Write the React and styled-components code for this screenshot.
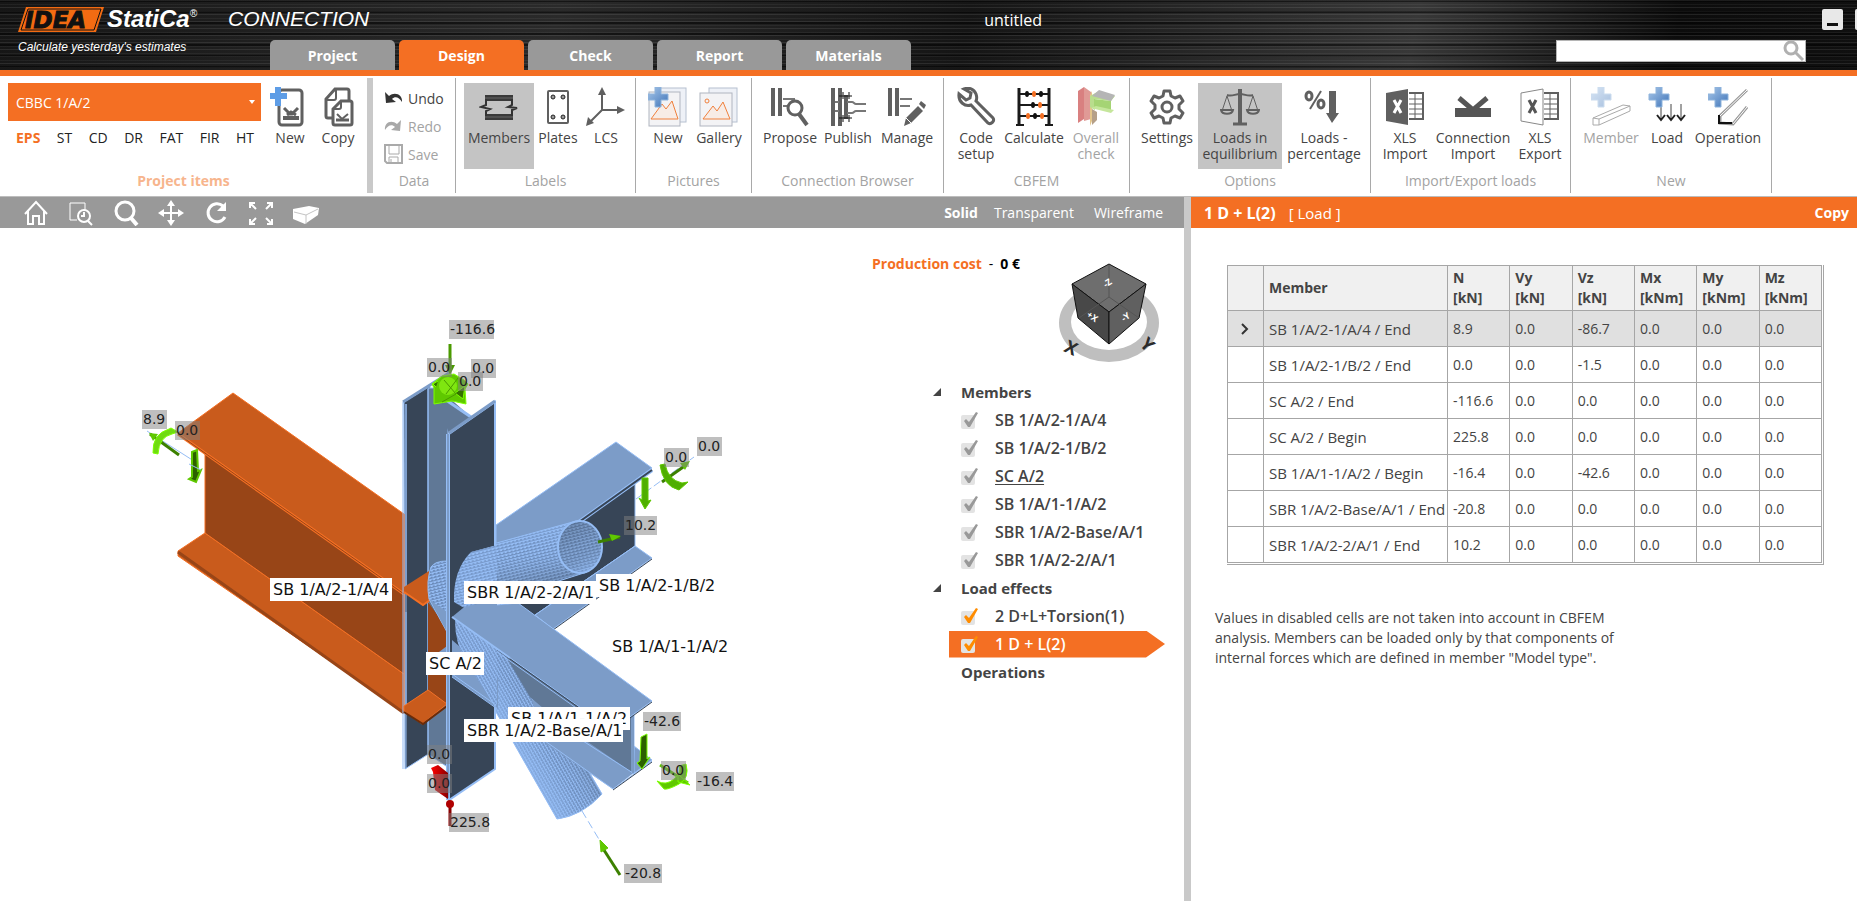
import React, { useState } from "react";
import styled, { createGlobalStyle, css } from "styled-components";

const orange = "#f46f23";
const ink = "#444444";
const muted = "#a3a3a3";

const GlobalStyle = createGlobalStyle`
  * {
    box-sizing: border-box;
  }
  body {
    margin: 0;
    background: #fff;
    color: ${ink};
    font-family: "Open Sans", "Noto Sans", sans-serif;
    font-size: 14px;
  }
  button, input, select {
    font: inherit;
    color: inherit;
    margin: 0;
  }
  button {
    background: none;
    border: 0;
    padding: 0;
    cursor: pointer;
  }
  svg {
    display: block;
    flex: none;
  }
`;

/* ---------- ribbon icons, 40 x 40 ---------- */

const Icon = ({ children, ...rest }) => (
  <svg width='40' height='40' viewBox='0 0 40 40' fill='none' {...rest}>
    {children}
  </svg>
);

const BluePlus = ({ x = 0, y = 0, opacity = 1 }) => (
  <g transform={`translate(${x} ${y})`} opacity={opacity}>
    <path
      d='M7 0h6v7h7v6h-7v7H7v-7H0V7h7z'
      fill='url(#plusFill)'
      stroke='#8fb4dc'
      strokeWidth='1'
    />
  </g>
);

const icons = {
  newItem: (
    <Icon>
      <rect x='9' y='3' width='23' height='35' rx='3' stroke='#606060' strokeWidth='3' />
      <path d='M13 31h16' stroke='#606060' strokeWidth='4' />
      <path d='M14 21l6 6h2l6-6M17 28l4-3 5 3' stroke='#606060' strokeWidth='3' />
      <path d='M5 0h6v6h6v6h-6v7H5v-7H0V6h5z' fill='#5e9de6' />
    </Icon>
  ),
  copyItem: (
    <Icon>
      <path d='M15 31H10a2 2 0 0 1-2-2V12L17 2h12a2 2 0 0 1 2 2v9' stroke='#606060' strokeWidth='3' />
      <path d='M8 13h8a2 2 0 0 0 2-2V3' stroke='#606060' strokeWidth='2' />
      <path d='M15 22l8-8h9a2 2 0 0 1 2 2v20a2 2 0 0 1-2 2H17a2 2 0 0 1-2-2z' fill='#fff' stroke='#606060' strokeWidth='3' />
      <path d='M15 22h6a2 2 0 0 0 2-2v-6' stroke='#606060' strokeWidth='2' />
      <path d='M18 33h13' stroke='#606060' strokeWidth='3' />
      <path d='M19 27l5 5 6-5' stroke='#606060' strokeWidth='2' />
    </Icon>
  ),
  members: (
    <Icon>
      <path d='M6 8h28v6H6zM6 27h28v6H6z' fill='#3a3a3a' />
      <path d='M6 11h28M6 30h28' stroke='#666' strokeWidth='1' />
      <path d='M7 12v6l-5 2 9 2-4 2v5M33 12v6l-4 2 9 1-5 2v6' stroke='#333' strokeWidth='2' />
    </Icon>
  ),
  plates: (
    <Icon>
      <rect x='10' y='4' width='20' height='32' rx='1' stroke='#606060' strokeWidth='2' />
      {[[15, 10], [25, 10], [15, 30], [25, 30]].map(([x, y]) => (
        <circle key={`${x}-${y}`} cx={x} cy={y} r='2' fill='#999' stroke='#222' strokeWidth='1' />
      ))}
    </Icon>
  ),
  lcs: (
    <Icon>
      <path d='M16 5v18h18M16 23L4 35' stroke='#606060' strokeWidth='2' />
      <path d='M16 0l4 8h-8zM39 23l-8 4v-8zM0 39l2-9 6 6z' fill='#606060' />
    </Icon>
  ),
  picture: (
    <Icon>
      <rect x='10' y='1' width='28' height='34' fill='#eef1f7' stroke='#b6c0d0' />
      <rect x='1' y='5' width='31' height='34' fill='#f3f3f5' stroke='#b0b5c0' />
      <path d='M3 32h27L24 14l-6 8-4-5z' stroke='#f0803c' strokeWidth='1' fill='#f7ece6' />
      <BluePlus />
    </Icon>
  ),
  gallery: (
    <Icon>
      <rect x='10' y='1' width='28' height='34' fill='#eef1f7' stroke='#b6c0d0' />
      <rect x='1' y='6' width='32' height='33' fill='#f3f3f5' stroke='#b0b5c0' />
      <path d='M4 32h27L24 15l-6 9-4-5z' stroke='#f0803c' strokeWidth='1' fill='#f7ece6' />
      <circle cx='8' cy='14' r='2' stroke='#f0803c' />
    </Icon>
  ),
  propose: (
    <Icon>
      <path d='M3 1v28M10 1v28' stroke='#606060' strokeWidth='4' />
      <path d='M13 12h12M13 19h6' stroke='#777' strokeWidth='2' />
      <circle cx='25' cy='21' r='7' stroke='#606060' strokeWidth='3' />
      <path d='M29 27l8 11' stroke='#606060' strokeWidth='4' />
    </Icon>
  ),
  publish: (
    <Icon>
      <path d='M5 1v38M12 1v38M18 8v24' stroke='#606060' strokeWidth='4' />
      <path d='M19 15h5c2 0 2 2 4 2h10M19 26h5c2 0 2-2 4-2h10' stroke='#777' strokeWidth='2' />
      <path d='M7 15h4M7 24h4' stroke='#777' strokeWidth='2' />
      <path d='M11 9h13M11 31h13M15 5v7M21 5v7M15 28v7M21 28v7' stroke='#111' strokeWidth='1' />
    </Icon>
  ),
  manage: (
    <Icon>
      <path d='M3 1v28M10 1v28' stroke='#606060' strokeWidth='4' />
      <path d='M13 12h12M13 19h10' stroke='#777' strokeWidth='2' />
      <path d='M17 39l2-8 12-12 5 5-12 12z' fill='#606060' />
      <path d='M32 17l2-3 5 4-2 4z' fill='#606060' />
      <path d='M19 31l5 5' stroke='#fff' />
    </Icon>
  ),
  wrench: (
    <Icon>
      <path
        d='M3 7l7 6 4-2 1-5-7-4c5-2 10 0 12 5 1 3 1 5 0 7l17 17c2 3-2 7-5 5L15 18c-6 2-13-3-12-11z'
        stroke='#606060'
        strokeWidth='3'
      />
    </Icon>
  ),
  abacus: (
    <Icon>
      <path d='M5 1v36M35 1v36' stroke='#1a1a1a' strokeWidth='3' />
      <path d='M2 38h8M31 38h8M5 7h30M5 18h30M5 29h30' stroke='#1a1a1a' strokeWidth='2' />
      <g fill='#111'>
        <ellipse cx='13' cy='7' rx='2' ry='3' />
        <ellipse cx='27' cy='7' rx='2' ry='3' />
        <ellipse cx='19' cy='18' rx='2' ry='3' />
        <ellipse cx='21' cy='29' rx='2' ry='3' />
      </g>
      <g fill={orange}>
        <ellipse cx='20' cy='7' rx='2' ry='3' />
        <ellipse cx='26' cy='18' rx='2' ry='3' />
        <ellipse cx='14' cy='29' rx='2' ry='3' />
        <ellipse cx='28' cy='29' rx='2' ry='3' />
      </g>
    </Icon>
  ),
  overall: (
    <Icon>
      <path d='M2 4l6-4v32l-6 4z' fill='#d98080' />
      <path d='M8 0l7 5v27l-7 2z' fill='#e09a96' />
      <path d='M14 8l2-4v30l-2 5z' fill='#e3c58a' />
      <path d='M16 22l5 3v8l-5 5z' fill='#b59f88' />
      <path d='M14 20V9l9-5 16 5-4 5-16-2v11z' fill='#b9dd8d' />
      <path d='M18 12l17 2v10l-17-3z' fill='#a5d474' />
      <path d='M16 9l7-6 16 5-4 6z' fill='#b5b5b5' />
      <path d='M15 21l5-2 18 4-3 3z' fill='#c5e69c' />
    </Icon>
  ),
  gear: (
    <Icon>
      <path
        d='M17 4h6l1 5 4 2 5-2 3 5-4 4v4l4 4-3 5-5-2-4 2-1 5h-6l-1-5-4-2-5 2-3-5 4-4v-4l-4-4 3-5 5 2 4-2z'
        stroke='#606060'
        strokeWidth='3'
        strokeLinejoin='round'
      />
      <circle cx='20' cy='20' r='5' stroke='#606060' strokeWidth='3' />
    </Icon>
  ),
  scales: (
    <Icon>
      <path d='M20 2v34' stroke='#606060' strokeWidth='4' />
      <path d='M13 37h14' stroke='#606060' strokeWidth='3' />
      <path d='M7 8c5 2 8-1 13-1s8 3 13 1' stroke='#606060' strokeWidth='2' />
      <path d='M7 9L2 24h10zM33 9l-5 15h10z' stroke='#606060' strokeWidth='1' />
      <path d='M1 23h12c-1 5-11 5-12 0zM27 23h12c-1 5-11 5-12 0z' fill='#c4c4c4' stroke='#606060' strokeWidth='2' />
    </Icon>
  ),
  percent: (
    <Icon>
      <ellipse cx='5' cy='9' rx='3' ry='4' stroke='#606060' strokeWidth='3' />
      <ellipse cx='17' cy='17' rx='3' ry='4' stroke='#606060' strokeWidth='3' />
      <path d='M17 4L6 22' stroke='#606060' strokeWidth='2' />
      <path d='M25 4h7v22h3l-7 10-6-10h3z' fill='#606060' />
    </Icon>
  ),
  xlsIn: (
    <Icon>
      <path d='M24 6h14v26H24' stroke='#606060' strokeWidth='2' />
      <path d='M24 12h14M24 17h14M24 22h14M24 27h14M30 6v26' stroke='#606060' strokeWidth='1' />
      <path d='M1 6l22-4v36L1 34z' fill='#606060' />
      <path d='M9 13l7 13M16 13L9 26' stroke='#fff' strokeWidth='3' />
    </Icon>
  ),
  connIn: (
    <Icon>
      <path d='M2 21h36v9H2z' fill='#555' />
      <path d='M6 11l14 12L34 11' stroke='#555' strokeWidth='5' />
    </Icon>
  ),
  xlsOut: (
    <Icon>
      <path d='M24 6h14v26H24' stroke='#606060' strokeWidth='2' />
      <path d='M24 12h14M24 17h14M24 22h14M24 27h14M30 6v26' stroke='#606060' strokeWidth='1' />
      <path d='M1 6l22-4v36L1 34z' fill='#fff' stroke='#888' strokeWidth='1' />
      <path d='M9 13l7 13M16 13L9 26' stroke='#555' strokeWidth='3' />
    </Icon>
  ),
  member: (
    <Icon>
      <BluePlus opacity='0.45' />
      <path d='M2 31l30-13 7 1v5L8 38H2zM2 31l6 1v6M8 32l31-13' stroke='#aaa' strokeWidth='1' />
    </Icon>
  ),
  load: (
    <Icon>
      <path d='M14 18v14M24 17v15M34 17v15' stroke='#444' strokeWidth='1' />
      <path d='M10 28l4 5 4-5M20 28l4 5 4-5M30 28l4 5 4-5' stroke='#222' strokeWidth='2' />
      <BluePlus x={2} />
    </Icon>
  ),
  operation: (
    <Icon>
      <path d='M39 3L12 29v7l13 1 14-17' stroke='#999' strokeWidth='3' />
      <path d='M39 3L12 29M25 37l14-17' stroke='#fff' strokeWidth='1' />
      <path d='M11 28v8h13' stroke='#111' strokeWidth='2' />
      <BluePlus />
    </Icon>
  ),
};

/* ---------- header ---------- */

const Header = styled.header`
  display: grid;
  grid-template-columns: 270px 1fr auto;
  grid-template-rows: 40px 30px;
  border-bottom: 6px solid ${orange};
  background:
    repeating-linear-gradient(180deg, rgba(255, 255, 255, 0.09) 0 1px, transparent 1px 4px, rgba(255, 255, 255, 0.05) 4px 5px, transparent 5px 7px),
    repeating-linear-gradient(180deg, rgba(0, 0, 0, 0.5) 0 2px, transparent 2px 11px),
    linear-gradient(100deg, #161616 0%, #2a2a2a 30%, #151515 52%, #383838 76%, #0c0c0c 90%, #101010 100%);
`;

const TopRow = styled.div`
  grid-column: 1 / -1;
  display: flex;
  align-items: flex-start;
  overflow: hidden;
`;

const Brand = styled.div`
  flex: 0 0 53%;
  display: flex;
  align-items: center;
  gap: 3px;
  padding: 5px 0 0 18px;
  color: #fff;
  font-family: "Liberation Sans", sans-serif;
  font-style: italic;
  line-height: 28px;
  white-space: nowrap;
`;

const BrandName = styled.span`
  font-size: 24px;
  font-weight: 700;
  sup {
    font-size: 10px;
    font-weight: 400;
    line-height: 10px;
    vertical-align: 10px;
  }
`;

const Product = styled.span`
  margin-left: 28px;
  font-size: 21px;
`;

const Title = styled.div`
  color: #fff;
  font-size: 16px;
  line-height: 40px;
`;

const WindowButtons = styled.div`
  display: flex;
  gap: 12px;
  margin: 9px -19px 0 auto;
`;

const WindowButton = styled.button`
  display: flex;
  justify-content: center;
  width: 21px;
  height: 21px;
  padding-top: 14px;
  border-radius: 2px;
  background: #e8e8e8;
  &::after {
    content: "";
    width: 11px;
    height: 3px;
    background: #111;
  }
`;

const Tagline = styled.div`
  padding-left: 18px;
  color: #fff;
  font-family: "Liberation Sans", sans-serif;
  font-size: 12px;
  font-style: italic;
  line-height: 14px;
`;

const Tabs = styled.nav`
  display: flex;
  gap: 4px;
`;

const Tab = styled.button`
  width: 125px;
  height: 30px;
  border-radius: 5px 5px 0 0;
  background: ${(p) => (p.$active ? orange : "#999")};
  color: #fff;
  font-weight: 700;
`;

const SearchBox = styled.label`
  display: flex;
  align-items: center;
  width: 250px;
  height: 22px;
  margin-right: 51px;
  border: 1px solid #b5b5b5;
  background: #fff;
  input {
    flex: 1;
    min-width: 0;
    height: 20px;
    border: 0;
    outline: none;
    background: none;
  }
`;

const Logo = () => (
  <svg width='86' height='25' viewBox='0 0 86 25' role='img' aria-label='IDEA'>
    <path d='M8 0h78l-8 25H0z' fill='#f36b12' />
    <path d='M10 2h73l-7 21H3z' fill='none' stroke='#111' strokeWidth='1' />
    <text
      x='7'
      y='21'
      fill='#111'
      stroke='#111'
      strokeWidth='1'
      fontFamily='DejaVu Sans, sans-serif'
      fontSize='23'
      fontWeight='700'
      fontStyle='italic'
    >
      IDEA
    </text>
  </svg>
);

/* ---------- ribbon ---------- */

const Ribbon = styled.div`
  display: flex;
  padding: 2px 0 3px;
  border-bottom: 1px solid #bdbdbd;
  overflow: hidden;
`;

const Group = styled.section`
  flex: none;
  display: flex;
  flex-direction: column;
  width: ${(p) => p.$width}px;
  padding-top: 5px;
  border-right: ${(p) => (p.$thick ? "6px solid #c9c9c9" : "1px solid #a9a9a9")};
`;

const GroupBody = styled.div`
  display: flex;
  min-height: 86px;
  padding-left: ${(p) => p.$pad || 0}px;
`;

const GroupTitle = styled.h2`
  margin: 0;
  color: ${(p) => (p.$accent ? "#f7b58d" : muted)};
  font-size: 14px;
  font-weight: ${(p) => (p.$accent ? 700 : 400)};
  line-height: 24px;
  text-align: center;
`;

const Tool = styled.button`
  flex: none;
  display: flex;
  flex-direction: column;
  align-items: center;
  gap: 3px;
  width: ${(p) => p.$width}px;
  padding-top: 4px;
  background: ${(p) => (p.$active ? "#c4c4c4" : "none")};
  color: ${ink};
  line-height: 16px;
  white-space: pre-line;
  ${(p) =>
    p.disabled &&
    css`
      color: ${muted};
    `}
`;

const ItemPicker = styled.div`
  width: 253px;
  margin-right: 4px;
`;

const SelectBox = styled.div`
  display: flex;
  align-items: center;
  height: 38px;
  padding-right: 6px;
  background: ${orange};
  select {
    flex: 1;
    height: 38px;
    padding: 0 8px;
    border: 0;
    outline: none;
    appearance: none;
    background: none;
    color: #fff;
  }
  option {
    color: ${ink};
  }
`;

const Caret = styled.span`
  border: 3px solid transparent;
  border-top: 4px solid #fff;
  border-bottom: 0;
`;

const CodeRow = styled.div`
  display: flex;
  justify-content: space-between;
  padding: 9px 7px 0 8px;
`;

const CodeButton = styled.button`
  color: ${(p) => (p.$active ? orange : "#222")};
  font-size: 14px;
  font-weight: ${(p) => (p.$active ? 700 : 400)};
  line-height: 16px;
`;

const DataList = styled.div`
  padding: 1px 0 0 11px;
`;

const DataButton = styled.button`
  display: flex;
  align-items: center;
  gap: 4px;
  height: 28px;
  color: ${(p) => (p.disabled ? muted : ink)};
`;

const ribbonGroups = [
  {
    title: "Labels",
    width: 180,
    pad: 8,
    tools: [
      { label: "Members", icon: "members", width: 70, active: true },
      { label: "Plates", icon: "plates", width: 48 },
      { label: "LCS", icon: "lcs", width: 48 },
    ],
  },
  {
    title: "Pictures",
    width: 116,
    pad: 7,
    tools: [
      { label: "New", icon: "picture", width: 50 },
      { label: "Gallery", icon: "gallery", width: 52 },
    ],
  },
  {
    title: "Connection Browser",
    width: 192,
    pad: 8,
    tools: [
      { label: "Propose", icon: "propose", width: 60 },
      { label: "Publish", icon: "publish", width: 56 },
      { label: "Manage", icon: "manage", width: 62 },
    ],
  },
  {
    title: "CBFEM",
    width: 186,
    pad: 6,
    tools: [
      { label: "Code\nsetup", icon: "wrench", width: 52 },
      { label: "Calculate", icon: "abacus", width: 64 },
      { label: "Overall\ncheck", icon: "overall", width: 60, disabled: true },
    ],
  },
  {
    title: "Options",
    width: 241,
    pad: 6,
    tools: [
      { label: "Settings", icon: "gear", width: 62 },
      { label: "Loads in\nequilibrium", icon: "scales", width: 84, active: true },
      { label: "Loads -\npercentage", icon: "percent", width: 84 },
    ],
  },
  {
    title: "Import/Export loads",
    width: 200,
    pad: 4,
    tools: [
      { label: "XLS\nImport", icon: "xlsIn", width: 60 },
      { label: "Connection\nImport", icon: "connIn", width: 76 },
      { label: "XLS\nExport", icon: "xlsOut", width: 58 },
    ],
  },
  {
    title: "New",
    width: 201,
    pad: 8,
    tools: [
      { label: "Member", icon: "member", width: 64, disabled: true },
      { label: "Load", icon: "load", width: 48 },
      { label: "Operation", icon: "operation", width: 74 },
    ],
  },
];

const codes = ["EPS", "ST", "CD", "DR", "FAT", "FIR", "HT"];

const RibbonBar = () => (
  <Ribbon>
    <Group $width={373} $thick>
      <GroupBody $pad={8}>
        <ItemPicker>
          <SelectBox>
            <select aria-label='Project item'>
              <option>CBBC 1/A/2</option>
            </select>
            <Caret />
          </SelectBox>
          <CodeRow>
            {codes.map((code, i) => (
              <CodeButton key={code} $active={i === 0}>
                {code}
              </CodeButton>
            ))}
          </CodeRow>
        </ItemPicker>
        <Tool $width={50}>
          {icons.newItem}
          New
        </Tool>
        <Tool $width={46}>
          {icons.copyItem}
          Copy
        </Tool>
      </GroupBody>
      <GroupTitle $accent>Project items</GroupTitle>
    </Group>
    <Group $width={83}>
      <GroupBody>
        <DataList>
          <DataButton>
            <svg width='20' height='20' viewBox='0 0 20 20'>
              <path d='M1 4l1 11 10-1-4-3c3-3 7-2 10 3 1-7-7-11-13-6z' fill='#333' />
            </svg>
            Undo
          </DataButton>
          <DataButton disabled>
            <svg width='20' height='20' viewBox='0 0 20 20'>
              <path d='M17 4l-1 11-9-1 4-3c-3-3-7-2-10 3-1-7 6-11 12-6z' fill='#a8a8a8' />
            </svg>
            Redo
          </DataButton>
          <DataButton disabled>
            <svg width='20' height='20' viewBox='0 0 20 20' fill='none' stroke='#aaa'>
              <path d='M1 1h17v18H3l-2-2z' strokeWidth='2' />
              <path d='M5 1v9h10V1M5 19v-6h9v6M7 15v4' />
            </svg>
            Save
          </DataButton>
        </DataList>
      </GroupBody>
      <GroupTitle>Data</GroupTitle>
    </Group>
    {ribbonGroups.map((g) => (
      <Group key={g.title} $width={g.width}>
        <GroupBody $pad={g.pad}>
          {g.tools.map((t) => (
            <Tool key={t.label} $width={t.width} $active={t.active} disabled={t.disabled}>
              {icons[t.icon]}
              {t.label}
            </Tool>
          ))}
        </GroupBody>
        <GroupTitle>{g.title}</GroupTitle>
      </Group>
    ))}
  </Ribbon>
);

/* ---------- view toolbar ---------- */

const ViewBar = styled.div`
  display: flex;
  align-items: center;
  justify-content: space-between;
  height: 31px;
  padding: 0 21px 0 23px;
  background: #999;
  color: #fff;
`;

const ViewTools = styled.div`
  display: flex;
  gap: 19px;
`;

const ViewModes = styled.div`
  display: flex;
  button {
    margin-left: 16px;
  }
  button:first-child {
    font-weight: 700;
  }
  button:last-child {
    margin-left: 20px;
  }
`;

const ToolSvg = ({ children }) => (
  <svg width='26' height='26' viewBox='0 0 26 26' fill='none' stroke='#fff' strokeWidth='2'>
    {children}
  </svg>
);

const viewTools = [
  {
    name: "Home",
    art: <path d='M2 14L13 2l11 12M5 11v13h5v-8h6v8h5V11' />,
  },
  {
    name: "Zoom window",
    art: (
      <>
        <path d='M9 20H2V3h15v7' strokeWidth='1' />
        <circle cx='16' cy='16' r='6' />
        <path d='M16 12v4h-3M20 21l4 4' />
      </>
    ),
  },
  {
    name: "Zoom",
    art: (
      <>
        <circle cx='12' cy='11' r='9' strokeWidth='3' />
        <path d='M18 18l6 7' strokeWidth='4' />
      </>
    ),
  },
  {
    name: "Pan",
    art: (
      <>
        <path d='M13 4v19M4 13h19' />
        <path d='M13 0l4 6H9zM13 26l4-6H9zM0 13l6-4v8zM26 13l-6-4v8z' fill='#fff' stroke='none' />
      </>
    ),
  },
  {
    name: "Rotate",
    art: (
      <>
        <path d='M20 6a9 9 0 1 0 2 11' strokeWidth='3' />
        <path d='M23 2v9h-9z' fill='#fff' stroke='none' />
      </>
    ),
  },
  {
    name: "Fit",
    art: (
      <path d='M2 8V3h5M2 3l6 6M24 8V3h-5M24 3l-6 6M2 19v5h5M2 24l6-6M24 19v5h-5M24 24l-6-6' />
    ),
  },
  {
    name: "Solid view",
    art: (
      <>
        <path d='M0 9l16-3 10 2-1 7-13 9-12-5z' fill='#fff' stroke='none' />
        <path d='M1 12l12 3 12-6M13 15v9' stroke='#c4c4c4' strokeWidth='1' />
      </>
    ),
  },
];

/* ---------- 3D scene ---------- */

const Viewport = styled.div`
  display: flex;
  flex: 1;
`;

const SceneBox = styled.div`
  flex: 1 1 0;
  min-width: 0;
  overflow: hidden;
`;

const valueTags = [
  { x: 449, y: 320, w: 45, t: "-116.6" },
  { x: 427, y: 358, w: 25, t: "0.0" },
  { x: 471, y: 359, w: 25, t: "0.0" },
  { x: 458, y: 372, w: 25, t: "0.0" },
  { x: 142, y: 410, w: 25, t: "8.9" },
  { x: 175, y: 421, w: 25, t: "0.0" },
  { x: 664, y: 448, w: 25, t: "0.0" },
  { x: 697, y: 437, w: 25, t: "0.0" },
  { x: 624, y: 516, w: 33, t: "10.2" },
  { x: 643, y: 712, w: 38, t: "-42.6" },
  { x: 661, y: 761, w: 25, t: "0.0" },
  { x: 696, y: 772, w: 38, t: "-16.4" },
  { x: 624, y: 864, w: 38, t: "-20.8" },
  { x: 427, y: 745, w: 25, t: "0.0" },
  { x: 427, y: 774, w: 25, t: "0.0" },
  { x: 449, y: 813, w: 40, t: "225.8" },
];

const nameTags = [
  { x: 270, y: 578, w: 122, t: "SB 1/A/2-1/A/4" },
  { x: 464, y: 581, w: 132, t: "SBR 1/A/2-2/A/1" },
  { x: 596, y: 574, w: 122, t: "SB 1/A/2-1/B/2" },
  { x: 609, y: 635, w: 122, t: "SB 1/A/1-1/A/2" },
  { x: 426, y: 652, w: 58, t: "SC A/2" },
  { x: 508, y: 707, w: 122, t: "SB 1/A/1-1/A/2" },
  { x: 464, y: 719, w: 159, t: "SBR 1/A/2-Base/A/1" },
];

const edge = "#95bdf5";
const face = "#7c9cc8";
const mid = "#607896";
const dark = "#374557";
const green = "#5fc800";
const lime = "#7dff00";

const Scene = () => (
  <svg width='850' height='673' viewBox='0 228 850 673' fontFamily='DejaVu Sans, sans-serif'>
    <defs>
      <linearGradient id='plusFill' x1='0' y1='0' x2='1' y2='1'>
        <stop offset='0' stopColor='#a9c8ea' />
        <stop offset='1' stopColor='#3f74b8' />
      </linearGradient>
      <pattern id='mesh' width='4' height='3' patternUnits='userSpaceOnUse' patternTransform='rotate(-14)'>
        <rect width='4' height='3' fill='#6c8cbb' />
        <rect width='4' height='1' fill={edge} />
        <rect width='2' height='2' fill={edge} />
      </pattern>
      <pattern id='meshDown' width='3' height='3' patternUnits='userSpaceOnUse' patternTransform='rotate(-30)'>
        <rect width='3' height='3' fill='#6c8cbb' />
        <rect width='1' height='3' fill={edge} />
        <rect width='2' height='1' fill={edge} />
      </pattern>
      <linearGradient id='tubeShade' x1='0' y1='0' x2='0.25' y2='1'>
        <stop offset='0' stopColor={edge} stopOpacity='0.7' />
        <stop offset='0.45' stopColor={edge} stopOpacity='0.1' />
        <stop offset='0.8' stopColor={dark} stopOpacity='0.3' />
        <stop offset='1' stopColor={edge} stopOpacity='0.6' />
      </linearGradient>
      <linearGradient id='boreShade' x1='0.3' y1='0' x2='0.7' y2='1'>
        <stop offset='0' stopColor={dark} stopOpacity='0.4' />
        <stop offset='0.5' stopColor={dark} stopOpacity='0.2' />
        <stop offset='1' stopColor={edge} stopOpacity='0.5' />
      </linearGradient>
      <linearGradient id='downShade' gradientUnits='userSpaceOnUse' x1='500' y1='735' x2='560' y2='700'>
        <stop offset='0' stopColor={edge} stopOpacity='0.8' />
        <stop offset='0.5' stopColor={edge} stopOpacity='0.1' />
        <stop offset='1' stopColor={dark} stopOpacity='0.3' />
      </linearGradient>
      <linearGradient id='redFill' x1='0' y1='0' x2='1' y2='0'>
        <stop offset='0' stopColor='#f00' />
        <stop offset='1' stopColor='#8a0000' />
      </linearGradient>
    </defs>

    {/* column, rear flange and web */}
    <path d='M404 402L430 386V753L405 769z' fill={dark} stroke={edge} />
    <path d='M428 388l6 0 14 12v34l1 334-21-14z' fill={mid} stroke={edge} />
    <path d='M433 388l4-1 34 30-22 17-10-30z' fill={mid} />
    <path d='M446 400l25 17' stroke={edge} strokeWidth='3' />
    <path d='M403 402l46-29' stroke={face} strokeWidth='3' />
    <path d='M406 404V768M428 389V754' stroke={edge} />

    {/* beam SB 1/A/2-1/A/4 */}
    <path d='M178 551l27-18 199 141V712L178 556z' fill='#c95b1c' stroke='#f46f23' />
    <path d='M178 552l226 161' stroke='#984517' strokeWidth='3' />
    <path d='M205 452v81l199 141V590z' fill='#984517' stroke='#f46f23' />
    <path d='M233 393l-55 40 226 160v-79z' fill='#c95b1c' stroke='#f46f23' />
    <path d='M178 434l226 160' stroke='#f46f23' strokeWidth='3' />
    <path d='M178 434l226 160' stroke='#984517' />
    <path d='M403 402V769M406 404V587M406 612V705' stroke={edge} />
    <path d='M428 602l19 26v76l-19-14z' fill='#984517' />
    <path d='M404 587l25-16v29l-6 6-19-14z' fill='#c95b1c' />
    <path d='M404 592l19 13 7-5' stroke='#f46f23' fill='none' strokeWidth='2' />
    <path d='M404 706l24-16 19 14-25 20-18-13z' fill='#c95b1c' stroke='#f46f23' />
    <path d='M404 712l19 12 24-18' stroke='#6b2b08' fill='none' strokeWidth='2' />
    <path d='M447 561q-12 0-16 6-5 14-2 32l18 33z' fill='url(#mesh)' stroke={edge} />
    <path d='M430 600l17 12v20z' fill={face} />
    <path d='M447 646l-8 6 8 6z' fill={face} />

    {/* beam SB 1/A/2-1/B/2 */}
    <path d='M580 521l55-37v62L535 615l-35 5V560z' fill={dark} />
    <path d='M635 546l17 12-99 71-18-14z' fill={face} stroke={edge} />
    <path d='M652 559l-99 71' stroke={dark} />
    <path d='M635 484v62L535 615' stroke={edge} fill='none' />
    <path d='M496 525l120-83 36 26-72 52-84 60z' fill={face} stroke={edge} />
    <path d='M652 470l-80 57' stroke={edge} strokeWidth='4' />
    <path d='M652 470l-80 57' stroke={dark} strokeWidth='2' />

    {/* brace SBR 1/A/2-Base/A/1 */}
    <path d='M452 648v29l66 50 40-24z' fill={face} />
    <path d='M505 655l107 74 21-14v58L500 682z' fill={mid} />
    <path d='M634 746l18 14-19 14z' fill={face} stroke={edge} />
    <path d='M500 683l133 90-20 15-113-81z' fill={face} stroke={edge} />
    <path d='M455 620q-2 22 10 40l27 45 65 114q25-3 45-25l-57-98-40-41z' fill='url(#meshDown)' />
    <path d='M455 620q-2 22 10 40l27 45 65 114q25-3 45-25l-57-98-40-41z' fill='url(#downShade)' stroke={edge} />
    <path d='M540 727l-8-27 27 5 74 68-20 16-68-46z' fill={face} />
    <path d='M530 697l-25-42 107 74 21-14v58l-70-48z' fill={mid} />
    <path d='M545 741l68 48 39-28M583 741l50 32' stroke={edge} fill='none' />
    <path d='M613 790l39-28' stroke={dark} />
    <path d='M633 715v58' stroke={edge} strokeWidth='3' />
    <path d='M633 715v58' stroke={mid} />

    {/* brace SBR 1/A/2-2/A/1 */}
    <path d='M580 520L482 547q-25 8-28 44-2 16 14 19l119-38z' fill='url(#mesh)' />
    <path d='M580 520L482 547q-25 8-28 44-2 16 14 19l119-38z' fill='url(#tubeShade)' stroke={edge} />
    <ellipse cx='580' cy='547' rx='22' ry='26' fill='url(#mesh)' />
    <ellipse cx='580' cy='547' rx='22' ry='26' fill='url(#boreShade)' stroke={edge} strokeWidth='2' />

    {/* beam SB 1/A/1-1/A/2, top flange */}
    <path d='M452 617l11-9 55-5 134 98-40 29z' fill={face} stroke={edge} />
    <path d='M452 618l160 113 40-29' stroke={dark} fill='none' />
    <path d='M455 622l155 110' stroke={edge} />

    {/* column, front flange */}
    <path d='M449 434l46-33v368l-46 31z' fill={dark} />
    <path d='M495 592V402l-46 32V800l46-31v-63' fill='none' stroke={edge} strokeWidth='2' />
    <path d='M454 602q-1-32 17-50l26-7v50l-31 14z' fill='url(#mesh)' />
    <path d='M454 602q-1-32 17-50l26-7v50l-31 14z' fill={edge} opacity='0.3' />
    <path d='M452 640v37l46 32v-30z' fill={face} />
    <path d='M455 620l42 28v62l-30-47q-12-18-12-43z' fill='url(#meshDown)' />
    <path d='M455 620l42 28v62l-30-47q-12-18-12-43z' fill={edge} opacity='0.3' />
    <path d='M452 617l11-9 17-5h17v46l-7-4z' fill={face} />
    <path d='M452 617l58 41' stroke={edge} strokeWidth='2' />
    <path d='M452 677l44 31M452 674l44 31' stroke={edge} />
    <path d='M448 434V800' stroke={edge} strokeWidth='4' />
    <path d='M448 434V798' stroke={face} strokeWidth='2' />
    <path d='M449 433l46-32' stroke={face} strokeWidth='3' />

    {/* top load */}
    <path d='M450 344v22' stroke='#4a9a00' strokeWidth='3' />
    <path d='M445 365h10l-5 10z' fill='#4a9a00' />
    <path d='M432 384l10-8 12-2 10 6 4 4-3 5 1 15-14-3-18 3v-16z' fill={green} stroke={lime} />
    <circle cx='448' cy='386' r='9' fill='#7fe610' />
    <path d='M455 393l10-7-2 13zM438 381l-5 3 3 3' fill='#357000' stroke={lime} />
    <path d='M444 380l12 14-14 8M458 378l-12 16' fill='none' stroke='#4a9a00' />

    {/* left load */}
    <path d='M147 431l50 32' stroke={edge} />
    <path d='M150 434l29 21' stroke='#3c8000' strokeWidth='3' />
    <path d='M149 433l9 1-5 7z' fill={green} />
    <path d='M178 432l-6 2q-13 3-14 20l-5-1q-1-19 16-24l2-1z' fill='#6fdb10' stroke={lime} />
    <path d='M192 452l5-2 1 21 3-1-5 12-7-3 3-2z' fill='#2c6000' stroke={green} strokeWidth='2' />
    <path d='M189 464l12 6' stroke={edge} />

    {/* right load */}
    <path d='M636 499l58-42' stroke={edge} strokeDasharray='8 3' />
    <path d='M662 482l24-17' stroke='#3c8000' strokeWidth='3' />
    <path d='M690 461l-10 2 5 7z' fill={green} />
    <path d='M660 465l5-1q3 16 17 19l6-1-9 8q-16-4-19-25z' fill='#4fae00' stroke={green} />
    <path d='M642 478h6v23l3-1-6 9-6-11 3 2z' fill='#4fae00' stroke={green} />
    <path d='M598 542l22-5' stroke='#3c8000' strokeWidth='3' />
    <path d='M609 534l12 2-9 5z' fill={green} />

    {/* lower right load */}
    <path d='M641 737l6-3 0 25 3-2-8 12-5-6 3-2z' fill='#2c6000' stroke={lime} />
    <path d='M660 765l28 18' stroke={green} strokeWidth='3' />
    <path d='M657 781q9 5 17-2t5-13l7-2q4 14-7 20t-15 5zM678 774l12 11-12-3z' fill={green} stroke={lime} />

    {/* brace load */}
    <path d='M582 811l18 30' stroke={edge} strokeDasharray='8 4' />
    <path d='M602 847l18 28' stroke='#3c8000' strokeWidth='3' />
    <path d='M600 840l1 12 7-4z' fill={green} stroke={green} />

    {/* bottom load */}
    <path d='M431 768l7-3 10 8v26l-13-9-2-18z' fill='url(#redFill)' />
    <path d='M450 806v20' stroke='#8a0000' strokeWidth='3' />
    <circle cx='450' cy='804' r='4' fill='#b00000' />

    <g fontSize='14' fill='#222'>
      {valueTags.map((v) => (
        <g key={`${v.x}-${v.y}`}>
          <rect x={v.x} y={v.y} width={v.w} height='19' fill='#808080' fillOpacity='0.5' />
          <text x={v.x + 1} y={v.y + 14}>
            {v.t}
          </text>
        </g>
      ))}
    </g>
    <g fontSize='16' fill='#111'>
      {nameTags.map((n) => (
        <g key={`${n.x}-${n.y}`}>
          <rect x={n.x} y={n.y} width={n.w} height='23' fill='#fff' />
          <text x={n.x + 3} y={n.y + 17}>
            {n.t}
          </text>
        </g>
      ))}
    </g>
  </svg>
);

/* ---------- navigator next to the scene ---------- */

const Side = styled.aside`
  flex: none;
  width: 334px;
`;

const SideTop = styled.div`
  display: flex;
  align-items: flex-start;
  height: 150px;
  padding: 24px 0 0 22px;
  svg {
    margin-top: 6px;
  }
`;

const Cost = styled.div`
  display: flex;
  gap: 7px;
  width: 181px;
  color: #000;
  line-height: 24px;
  white-space: nowrap;
  strong:first-child {
    color: ${orange};
  }
`;

const Cube = () => (
  <svg width='110' height='110' viewBox='1053 258 110 110' fontFamily='Open Sans, sans-serif'>
    <path
      d='M1059 323a50 39 0 1 0 100 0a50 39 0 1 0-100 0zM1071 322a38 28 0 1 1 76 0a38 28 0 1 1-76 0z'
      fill='#bfbfbf'
      fillRule='evenodd'
    />
    <g stroke='#111' strokeWidth='1' strokeLinejoin='round'>
      <path d='M1109 264l37 20-37 28-37-28z' fill='#6e6e6e' />
      <path d='M1072 284l37 28v32l-31-26z' fill='#484848' />
      <path d='M1146 284l-37 28v32l30-26z' fill='#606060' />
    </g>
    <path d='M1109 265v32l-30 21M1109 297l30 21' stroke='#555' fill='none' />
    <g fill='#fff' fontSize='9' fontWeight='700'>
      <text transform='translate(1106 288) rotate(-35)'>-Z</text>
      <text transform='translate(1086 316) rotate(35)'>+X</text>
      <text transform='translate(1124 322) rotate(-35)'>-Y</text>
    </g>
    <g fill='#2b2b2b' fontSize='18' fontWeight='700'>
      <text transform='translate(1063 351) rotate(25)'>X</text>
      <text transform='translate(1139 345) rotate(45)'>Y</text>
    </g>
  </svg>
);

const Tree = styled.ul`
  margin: 0;
  padding: 0 0 0 83px;
  list-style: none;
  font-size: 16px;
  font-weight: 600;
`;

const TreeHead = styled.li`
  display: flex;
  align-items: center;
  height: 28px;
  padding-left: 28px;
  font-size: 15px;
  font-weight: 700;
  ${(p) =>
    p.$open &&
    css`
      padding-left: 0;
      &::before {
        content: "";
        margin-right: 20px;
        border-left: 8px solid transparent;
        border-bottom: 8px solid ${ink};
      }
    `}
`;

const TreeItem = styled.li`
  display: flex;
  align-items: center;
  height: 28px;
  padding-left: 28px;
`;

const TreeLabel = styled.label`
  display: flex;
  align-items: center;
  gap: 17px;
  height: 27px;
  white-space: nowrap;
  span {
    text-decoration: ${(p) => (p.$underline ? "underline" : "none")};
    text-underline-offset: 2px;
  }
  ${(p) =>
    p.$selected &&
    css`
      width: 216px;
      margin-left: -12px;
      padding-left: 12px;
      background: ${orange};
      color: #fff;
      clip-path: polygon(0 0, 197px 0, 100% 50%, 197px 100%, 0 100%);
    `}
`;

const Check = styled.div`
  display: grid;
  width: 17px;
  height: 18px;
  > * {
    grid-area: 1 / 1;
  }
  input {
    appearance: none;
    align-self: end;
    width: 14px;
    height: 14px;
    border-radius: 2px;
    background: #e3e3e3;
  }
  svg {
    pointer-events: none;
    z-index: 1;
  }
`;

const members = [
  "SB 1/A/2-1/A/4",
  "SB 1/A/2-1/B/2",
  "SC A/2",
  "SB 1/A/1-1/A/2",
  "SBR 1/A/2-Base/A/1",
  "SBR 1/A/2-2/A/1",
];

const Entry = ({ name, color, underline, selected }) => {
  const [checked, setChecked] = useState(true);
  return (
    <TreeItem>
      <TreeLabel $underline={underline} $selected={selected}>
        <Check>
          <input type='checkbox' checked={checked} onChange={() => setChecked(!checked)} />
          {checked && (
            <svg width='17' height='18' viewBox='0 0 17 18'>
              <path d='M3 10l2-2 3 3 7-10 2 1-8 14H7z' fill={color} />
            </svg>
          )}
        </Check>
        <span>{name}</span>
      </TreeLabel>
    </TreeItem>
  );
};

/* ---------- load panel ---------- */

const Main = styled.main`
  display: flex;
  flex: 1;
`;

const LeftPane = styled.section`
  display: flex;
  flex: 1;
  flex-direction: column;
  min-width: 0;
`;

const RightPane = styled.section`
  flex: none;
  width: 673px;
  border-left: 7px solid #c9c9c9;
`;

const PanelBar = styled.div`
  display: flex;
  align-items: center;
  gap: 13px;
  height: 31px;
  padding: 0 8px 0 13px;
  background: ${orange};
  color: #fff;
  strong {
    font-size: 16px;
  }
  span {
    font-size: 15px;
  }
  button {
    margin-left: auto;
    font-weight: 700;
  }
`;

const TableFrame = styled.div`
  width: 597px;
  margin: 37px 0 0 36px;
  padding: 0 1px 1px 0;
  border: 1px solid #a6a6a6;
  border-width: 0 1px 1px 0;
`;

const Table = styled.table`
  width: 100%;
  border-collapse: collapse;
  table-layout: fixed;
  th, td {
    height: 36px;
    padding: 0 0 0 5px;
    border: 1px solid #a6a6a6;
    font-size: 14px;
    text-align: left;
    white-space: nowrap;
  }
  td:nth-child(2) {
    font-size: 15px;
  }
  th {
    height: 45px;
    background: #f0f0f0;
    line-height: 20px;
    white-space: pre-line;
  }
`;

const Row = styled.tr`
  background: ${(p) => (p.$selected ? "#e0e0e0" : "#fff")};
  svg {
    margin-left: 8px;
  }
`;

const Note = styled.p`
  width: 420px;
  margin: 43px 0 0 24px;
  line-height: 20px;
`;

const rows = [
  ["SB 1/A/2-1/A/4 / End", "8.9", "0.0", "-86.7", "0.0", "0.0", "0.0"],
  ["SB 1/A/2-1/B/2 / End", "0.0", "0.0", "-1.5", "0.0", "0.0", "0.0"],
  ["SC A/2 / End", "-116.6", "0.0", "0.0", "0.0", "0.0", "0.0"],
  ["SC A/2 / Begin", "225.8", "0.0", "0.0", "0.0", "0.0", "0.0"],
  ["SB 1/A/1-1/A/2 / Begin", "-16.4", "0.0", "-42.6", "0.0", "0.0", "0.0"],
  ["SBR 1/A/2-Base/A/1 / End", "-20.8", "0.0", "0.0", "0.0", "0.0", "0.0"],
  ["SBR 1/A/2-2/A/1 / End", "10.2", "0.0", "0.0", "0.0", "0.0", "0.0"],
];

const columns = ["N\n[kN]", "Vy\n[kN]", "Vz\n[kN]", "Mx\n[kNm]", "My\n[kNm]", "Mz\n[kNm]"];

const LoadTable = () => (
  <TableFrame>
    <Table>
      <colgroup>
        <col width='36' />
        <col width='184' />
        {columns.map((c) => (
          <col key={c} />
        ))}
      </colgroup>
      <thead>
        <tr>
          <th aria-label='Selected' />
          <th>Member</th>
          {columns.map((c) => (
            <th key={c}>{c}</th>
          ))}
        </tr>
      </thead>
      <tbody>
        {rows.map((row, i) => (
          <Row key={row[0]} $selected={i === 0}>
            <td>
              {i === 0 && (
                <svg width='8' height='12' viewBox='0 0 8 12'>
                  <path d='M1 1l5 5-5 5' fill='none' stroke='#333' strokeWidth='2' />
                </svg>
              )}
            </td>
            {row.map((value, j) => (
              <td key={j}>{value}</td>
            ))}
          </Row>
        ))}
      </tbody>
    </Table>
  </TableFrame>
);

const Page = styled.div`
  display: flex;
  flex-direction: column;
  min-height: 100vh;
  overflow: hidden;
`;

const App = () => {
  const [tab, setTab] = useState("Design");
  return (
    <Page>
      <GlobalStyle />
      <Header>
        <TopRow>
          <Brand>
            <Logo />
            <BrandName>
              StatiCa<sup>®</sup>
            </BrandName>
            <Product>CONNECTION</Product>
          </Brand>
          <Title>untitled</Title>
          <WindowButtons>
            <WindowButton aria-label='Minimize' />
            <WindowButton aria-label='Maximize' />
          </WindowButtons>
        </TopRow>
        <Tagline>Calculate yesterday's estimates</Tagline>
        <Tabs>
          {["Project", "Design", "Check", "Report", "Materials"].map((t) => (
            <Tab key={t} $active={t === tab} onClick={() => setTab(t)}>
              {t}
            </Tab>
          ))}
        </Tabs>
        <SearchBox>
          <input type='search' aria-label='Search' />
          <svg width='22' height='20' viewBox='0 0 22 20' fill='none' stroke='#b0b0b0'>
            <circle cx='8' cy='7' r='6' strokeWidth='3' />
            <path d='M12 11l8 8' strokeWidth='3' />
          </svg>
        </SearchBox>
      </Header>
      <RibbonBar />
      <Main>
        <LeftPane>
          <ViewBar>
            <ViewTools>
              {viewTools.map((t) => (
                <button key={t.name} aria-label={t.name}>
                  <ToolSvg>{t.art}</ToolSvg>
                </button>
              ))}
            </ViewTools>
            <ViewModes>
              <button>Solid</button>
              <button>Transparent</button>
              <button>Wireframe</button>
            </ViewModes>
          </ViewBar>
          <Viewport>
            <SceneBox>
              <Scene />
            </SceneBox>
            <Side>
              <SideTop>
                <Cost>
                  <strong>Production cost</strong>
                  <span>-</span>
                  <strong>0 €</strong>
                </Cost>
                <Cube />
              </SideTop>
              <Tree>
                <TreeHead $open>Members</TreeHead>
                {members.map((m) => (
                  <Entry key={m} name={m} color='#999' underline={m === "SC A/2"} />
                ))}
                <TreeHead $open>Load effects</TreeHead>
                <Entry name='2 D+L+Torsion(1)' color='#ff8c00' />
                <Entry name='1 D + L(2)' color='#ff8c00' selected />
                <TreeHead>Operations</TreeHead>
              </Tree>
            </Side>
          </Viewport>
        </LeftPane>
        <RightPane>
          <PanelBar>
            <strong>1 D + L(2)</strong>
            <span>[ Load ]</span>
            <button>Copy</button>
          </PanelBar>
          <LoadTable />
          <Note>
            Values in disabled cells are not taken into account in CBFEM analysis. Members can be
            loaded only by that components of internal forces which are defined in member "Model
            type".
          </Note>
        </RightPane>
      </Main>
    </Page>
  );
};

export default App;
